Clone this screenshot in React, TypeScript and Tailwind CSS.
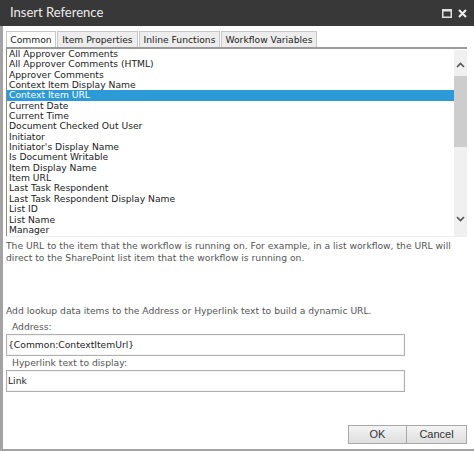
import React from "react";

const items = [
  "All Approver Comments",
  "All Approver Comments (HTML)",
  "Approver Comments",
  "Context Item Display Name",
  "Context Item URL",
  "Current Date",
  "Current Time",
  "Document Checked Out User",
  "Initiator",
  "Initiator's Display Name",
  "Is Document Writable",
  "Item Display Name",
  "Item URL",
  "Last Task Respondent",
  "Last Task Respondent Display Name",
  "List ID",
  "List Name",
  "Manager",
];

const tabs = [
  { label: "Common", w: "w-[50px]", active: true },
  { label: "Item Properties", w: "w-[81px]", active: false },
  { label: "Inline Functions", w: "w-[81px]", active: false },
  { label: "Workflow Variables", w: "w-[96px]", active: false },
];

function Chevron({ up }: { up?: boolean }) {
  return (
    <svg width="9" height="6" viewBox="0 0 9 6" className="text-[#555]">
      <path
        d={up ? "M1 5 L4.5 1.5 L8 5" : "M1 1 L4.5 4.5 L8 1"}
        fill="none"
        stroke="currentColor"
        strokeWidth="1.6"
      />
    </svg>
  );
}

export default function App() {
  return (
    <div className="w-[474px] h-[451px] bg-white overflow-hidden flex flex-col font-['DejaVu_Sans',Verdana,sans-serif]">
      {/* title bar */}
      <div className="h-[26px] shrink-0 bg-[#383838] flex items-center justify-between pl-[10px] pr-[7px]">
        <span className="text-[13px] text-[#ececec] font-['Lato',sans-serif]">Insert Reference</span>
        <div className="flex items-center gap-[6px]">
          <svg width="10" height="9" viewBox="0 0 10 9">
            <rect x="0.75" y="0.75" width="8.5" height="7.5" fill="none" stroke="#e0e0e0" strokeWidth="1.5" />
            <rect x="0" y="0" width="10" height="2.5" fill="#e0e0e0" />
          </svg>
          <svg width="9" height="9" viewBox="0 0 9 9">
            <path d="M1 1 L8 8 M8 1 L1 8" stroke="#f0f0f0" strokeWidth="2" />
          </svg>
        </div>
      </div>

      {/* body */}
      <div className="flex-1 flex flex-col border-l-[3px] border-b-[2px] border-[#a3a3a3] pl-[3px] pr-[7px]">
        {/* tabs */}
        <div className="flex gap-[1px] pt-[5px] h-[21px] shrink-0">
          {tabs.map((t) => (
            <div
              key={t.label}
              className={`${t.w} h-[16px] flex items-center justify-center whitespace-nowrap text-[9.2px] text-[#222] border border-b-0 border-[#c8c8c8] ${
                t.active ? "bg-white" : "bg-[#ededed]"
              }`}
            >
              {t.label}
            </div>
          ))}
        </div>
        <div className="h-[2px] bg-[#9a9a9a] shrink-0" />

        {/* list */}
        <div className="h-[187px] shrink-0 flex border-l border-[#8a8a8a]">
          <div className="flex-1 flex flex-col">
            {items.map((it) => {
              const sel = it === "Context Item URL";
              return (
                <div
                  key={it}
                  className={`h-[10.35px] leading-[10.35px] text-[9.2px] pl-[2px] whitespace-nowrap ${
                    sel ? "bg-[#2d9ad8] text-white" : "text-[#222]"
                  }`}
                >
                  {it}
                </div>
              );
            })}
          </div>
          <div className="w-[13px] bg-[#f0f0f0] flex flex-col mt-[1px]">
            <div className="h-[26px] flex items-center justify-center pt-[3px]">
              <Chevron up />
            </div>
            <div className="h-[71px] bg-[#cdcdcd]" />
            <div className="flex-1" />
            <div className="h-[34px] flex items-center justify-center">
              <Chevron />
            </div>
          </div>
        </div>
        <div className="h-[1px] bg-[#eeeeee] shrink-0" />

        {/* description */}
        <div className="pt-[3px] text-[9.2px] leading-[12px] text-[#555]">
          The URL to the item that the workflow is running on. For example, in a list workflow, the URL will direct to
          the SharePoint list item that the workflow is running on.
        </div>
        <div className="pt-[41px] text-[9.2px] leading-[12px] text-[#555]">
          Add lookup data items to the Address or Hyperlink text to build a dynamic URL.
        </div>

        <div className="pt-[4px] pl-[6px] text-[9.2px] leading-[12px] text-[#555]">Address:</div>
        <div className="mt-[1px] w-[399px] h-[22px] border border-[#b0b0b0] flex items-center pl-[1px] text-[9.2px] text-[#222] shadow-[inset_0_0_0_1px_#f4f4f4]">
          {"{Common:ContextItemUrl}"}
        </div>
        <div className="pt-[1px] pl-[6px] text-[9.2px] leading-[12px] text-[#555]">Hyperlink text to display:</div>
        <div className="mt-[1px] w-[399px] h-[22px] border border-[#b0b0b0] flex items-center pl-[1px] text-[9.2px] text-[#222] shadow-[inset_0_0_0_1px_#f4f4f4]">
          Link
        </div>

        {/* buttons */}
        <div className="flex-1 flex items-start justify-end pt-[33px]">
          <button className="w-[59px] h-[19px] border border-[#a8a8a8] bg-gradient-to-b from-[#f4f4f4] to-[#dedede] text-[11px] text-[#333] font-['Liberation_Sans',Arial,sans-serif]">
            OK
          </button>
          <button className="w-[60px] h-[19px] border border-l-0 border-[#a8a8a8] bg-gradient-to-b from-[#f4f4f4] to-[#dedede] text-[11px] text-[#333] font-['Liberation_Sans',Arial,sans-serif]">
            Cancel
          </button>
        </div>
      </div>
    </div>
  );
}
